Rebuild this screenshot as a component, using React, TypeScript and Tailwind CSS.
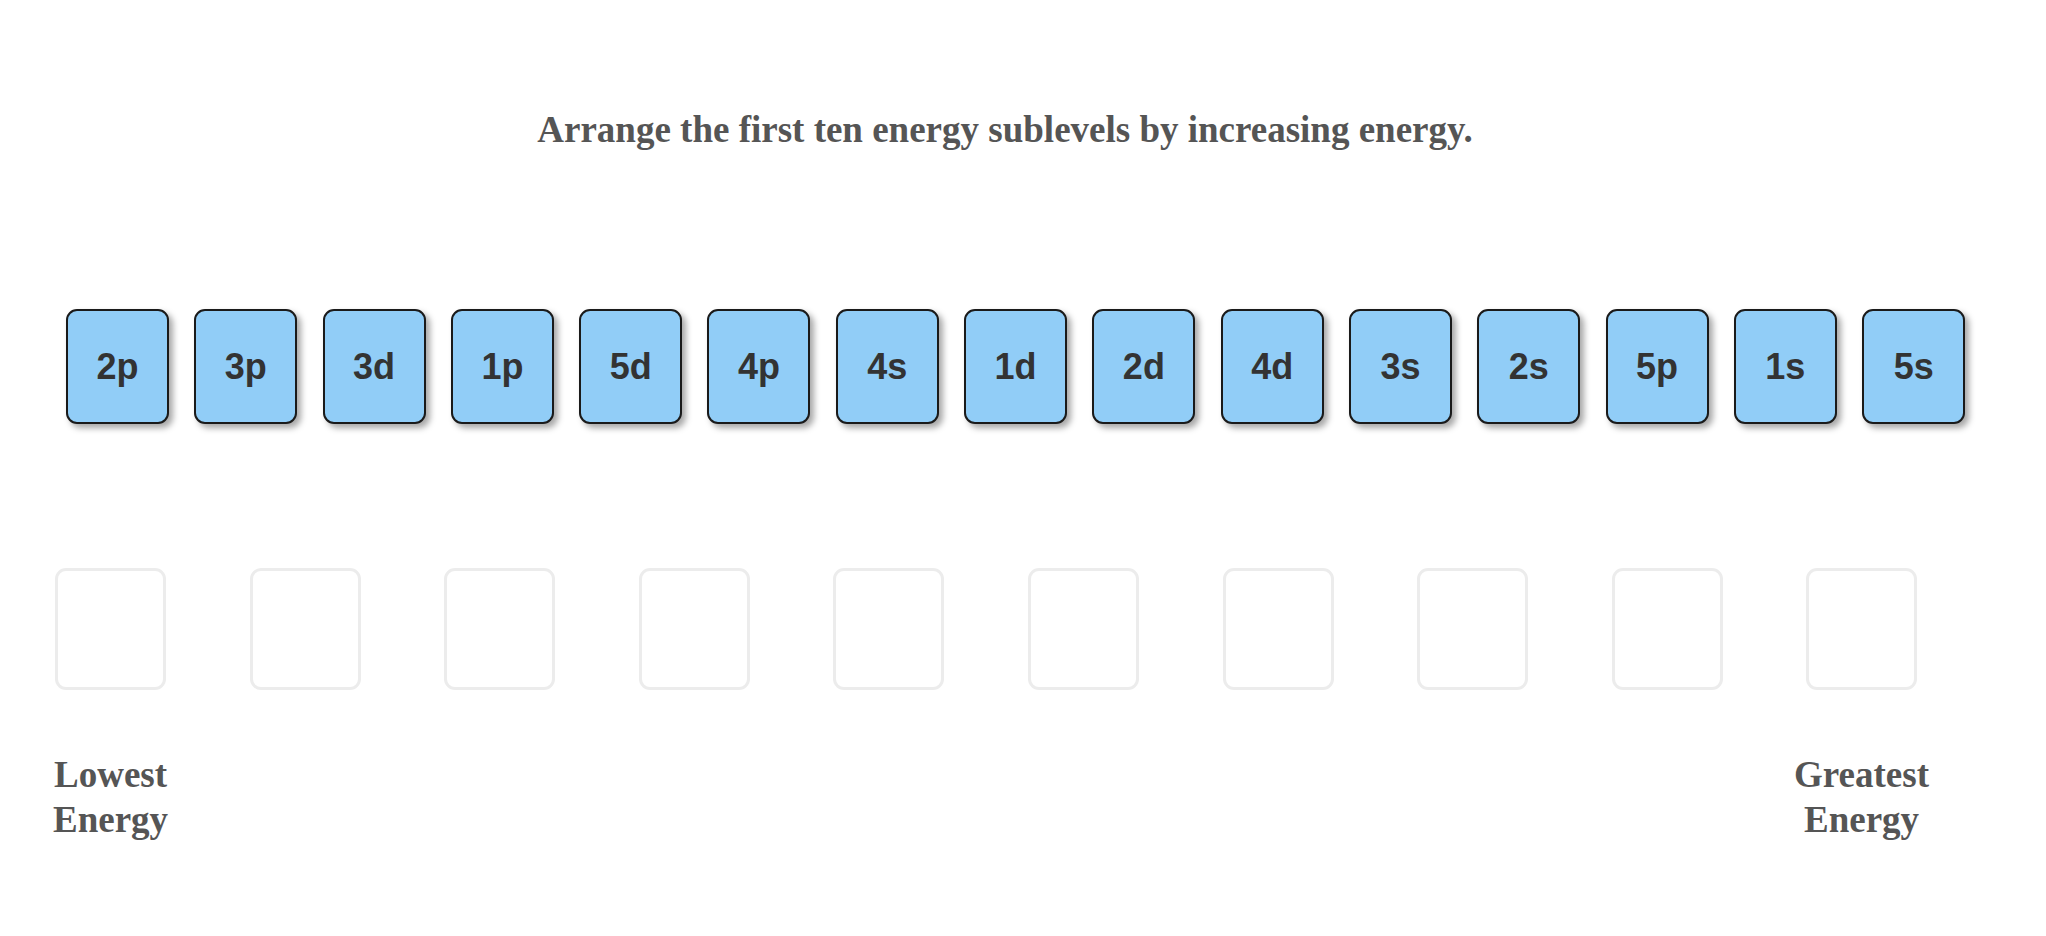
import React from "react";

const tiles = ["2p", "3p", "3d", "1p", "5d", "4p", "4s", "1d", "2d", "4d", "3s", "2s", "5p", "1s", "5s"];
const slots = Array.from({ length: 10 }, (_, i) => i);

const Tile: React.FC<{ label: string }> = ({ label }) => (
  <div className="flex h-[115px] w-[103px] shrink-0 items-center justify-center rounded-[11px] border-2 border-[#1a1a1a] bg-[#91cdf7] shadow-[4px_4px_6px_rgba(0,0,0,0.35)]">
    <span className="font-['Liberation_Sans',Arial,sans-serif] text-[36px] font-bold text-[#333]">
      {label}
    </span>
  </div>
);

const Slot: React.FC = () => (
  <div className="h-[122px] w-[111px] shrink-0 rounded-[11px] border-[3px] border-[#ececec] bg-white" />
);

const App: React.FC = () => {
  return (
    <div className="min-h-[936px] w-[2046px] bg-white pt-[107px] font-['Liberation_Serif','Times_New_Roman',serif]">
      <h1 className="pr-[36px] text-center text-[37px] leading-[45px] font-bold text-[#555]">
        Arrange the first ten energy sublevels by increasing energy.
      </h1>

      <div className="mt-[157px] flex gap-[25.3px] pl-[66px]">
        {tiles.map((t) => (
          <Tile key={t} label={t} />
        ))}
      </div>

      <div className="mt-[144px] flex gap-[83.6px] pl-[55px]">
        {slots.map((i) => (
          <Slot key={i} />
        ))}
      </div>

      <div className="mt-[62px] flex w-[1917px] justify-between pl-[55px] text-[37px] leading-[45px] font-bold text-[#555]">
        <div className="flex w-[111px] flex-col items-center whitespace-nowrap">
          <span>Lowest</span>
          <span>Energy</span>
        </div>
        <div className="flex w-[111px] flex-col items-center whitespace-nowrap">
          <span>Greatest</span>
          <span>Energy</span>
        </div>
      </div>
    </div>
  );
};

export default App;
